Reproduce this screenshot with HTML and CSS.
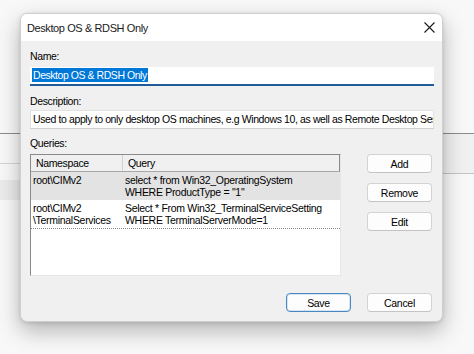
FILE: index.html
```html
<!DOCTYPE html>
<html>
<head>
<meta charset="utf-8">
<link rel="stylesheet" href="styles.css">
</head>
<body>
<div class="desktop">
  <div class="dialog">
    <div class="titlebar">
      <span class="title">Desktop OS &amp; RDSH Only</span>
      <svg class="close" width="11" height="11" viewBox="0 0 11 11"><path d="M0.5 0.5 L10.5 10.5 M10.5 0.5 L0.5 10.5" stroke="#1a1a1a" stroke-width="1.1" fill="none"/></svg>
    </div>
    <div class="content">
      <div class="lbl">Name:</div>
      <div class="field name"><span class="selected">Desktop OS &amp; RDSH Only</span></div>
      <div class="lbl desc-lbl">Description:</div>
      <div class="field desc">Used to apply to only desktop OS machines, e.g Windows 10, as well as Remote Desktop Session Hosts</div>
      <div class="lbl queries-lbl">Queries:</div>
      <div class="queries">
        <div class="list">
          <div class="head">
            <div class="hcell ns">Namespace</div>
            <div class="hcell q">Query</div>
          </div>
          <div class="row row-sel">
            <div class="cell ns">root\CIMv2</div>
            <div class="cell q">select * from Win32_OperatingSystem<br>WHERE ProductType = "1"</div>
          </div>
          <div class="row row-focus">
            <div class="cell ns">root\CIMv2<br>\TerminalServices</div>
            <div class="cell q">Select * From Win32_TerminalServiceSetting<br>WHERE TerminalServerMode=1</div>
          </div>
        </div>
        <div class="side">
          <button class="btn">Add</button>
          <button class="btn">Remove</button>
          <button class="btn">Edit</button>
        </div>
      </div>
      <div class="footer">
        <button class="btn default">Save</button>
        <button class="btn">Cancel</button>
      </div>
    </div>
  </div>
</div>
</body>
</html>
```
FILE: styles.css
```css
* { box-sizing: border-box; }
html, body { margin: 0; padding: 0; }
body {
  width: 474px;
  height: 354px;
  overflow: hidden;
  font-family: "Liberation Sans", Arial, sans-serif;
  font-size: 10.5px;
  letter-spacing: -0.36px;
  color: #000;
}
.desktop {
  position: relative;
  width: 474px;
  height: 354px;
  background-color: #f8f8f8;
  background-image:
    linear-gradient(to bottom, transparent 133px, #8c8c8c 133px, #8c8c8c 134px, transparent 134px, transparent 163px, #d4d4d4 163px, #d4d4d4 164px, transparent 164px, transparent 180px, #ebebeb 180px, #ebebeb 200px, transparent 200px),
    linear-gradient(to bottom, transparent 133px, #8c8c8c 133px, #8c8c8c 134px, #f0f0f0 134px, #f0f0f0 173px, #c4c4c4 173px, #c4c4c4 174px, transparent 174px);
  background-size: 20px 354px, 31px 354px;
  background-position: 0 0, 443px 0;
  background-repeat: no-repeat;
}
.dialog {
  position: absolute;
  left: 20px;
  top: 13px;
  width: 423px;
  height: 309px;
  background: #f0f0f0;
  border: 1px solid #cfcfcf;
  border-radius: 7px;
  box-shadow: 0 9px 22px rgba(0, 0, 0, 0.28), 0 1px 4px rgba(0,0,0,0.12);
  overflow: hidden;
  display: flex;
  flex-direction: column;
}
.titlebar {
  height: 27px;
  flex: none;
  background: #fff;
  display: flex;
  align-items: center;
  justify-content: space-between;
  padding: 0 7px 0 6px;
}
.title {
  font-size: 11px;
  letter-spacing: -0.4px;
  color: #1a1a1a;
}
.close { display: block; }
.content {
  flex: 1;
  display: flex;
  flex-direction: column;
  padding: 8px 8px 9px 9px;
}
.lbl {
  line-height: 14px;
  margin-bottom: 4px;
}
.desc-lbl { margin-top: 8px; margin-bottom: 2px; }
.queries-lbl { margin-top: 7px; margin-bottom: 4px; }
.field {
  height: 19px;
  background: #fff;
  white-space: nowrap;
  overflow: hidden;
  line-height: 17px;
  padding-left: 2px;
}
.field.name {
  border-bottom: 2px solid #1f5c99;
}
.selected {
  background: #0078d7;
  color: #fff;
  padding: 1px 1px;
  letter-spacing: -0.45px;
}
.field.desc {
  border: 1px solid #e2e2e2;
  border-bottom-color: #cfcfcf;
  line-height: 17px;
  padding-left: 2px;
  letter-spacing: -0.39px;
}
.queries {
  display: flex;
}
.list {
  width: 311px;
  height: 122px;
  background: #fff;
  border: 1px solid #e6e6e6;
  border-top-color: #8a8a8a;
  border-left-color: #8a8a8a;
}
.head {
  display: flex;
  height: 17px;
  background: #f0f0f0;
  border-bottom: 1px solid #a8a8a8;
  border-right: 1px solid #8a8a8a;
}
.hcell {
  line-height: 16px;
  padding-left: 5px;
}
.hcell.ns {
  width: 92px;
  border-right: 1px solid #d0d0d0;
}
.row {
  display: flex;
  height: 28px;
  line-height: 12px;
  padding-top: 2px;
  letter-spacing: -0.3px;
}
.row-sel { background: #e3e3e3; }
.row-focus { border-bottom: 1px dotted #8a8a8a; height: 29px; }
.cell { white-space: nowrap; }
.cell.ns { width: 93px; padding-left: 2px; }
.cell.q { padding-left: 1px; }
.side {
  margin-left: auto;
  margin-right: 2px;
  display: flex;
  flex-direction: column;
  gap: 10px;
}
.btn {
  width: 65px;
  height: 19px;
  padding: 0;
  font-family: inherit;
  font-size: 10.5px;
  letter-spacing: -0.3px;
  color: #000;
  background: #fdfdfd;
  border: 1px solid #d3d3d3;
  border-bottom-color: #c4c4c4;
  border-radius: 4px;
}
.btn.default {
  border: 1px solid #4a86c0;
  box-shadow: inset 0 0 0 1px #d7e6f4;
}
.footer {
  margin-top: auto;
  display: flex;
  justify-content: flex-end;
  gap: 16px;
  padding-right: 2px;
}
```
